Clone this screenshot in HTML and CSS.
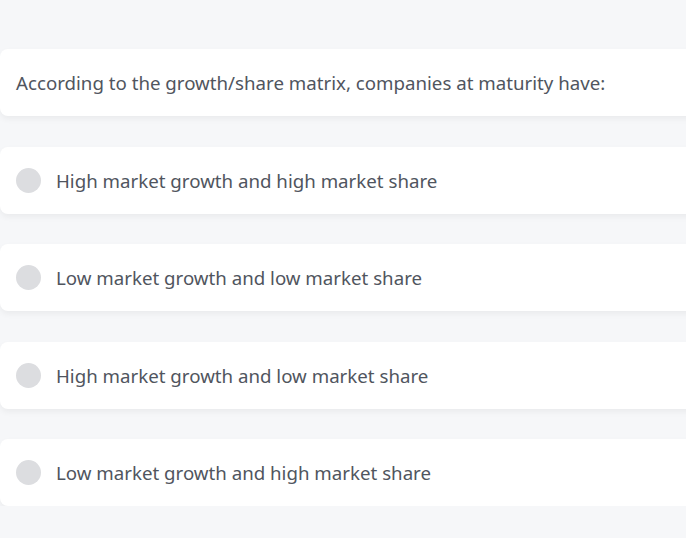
FILE: index.html
```html
<!DOCTYPE html>
<html>
<head>
<meta charset="utf-8">
<link rel="stylesheet" href="styles.css">
</head>
<body>
<div class="quiz">
  <div class="card question">According to the growth/share matrix, companies at maturity have:</div>
  <div class="card option"><span class="radio"></span><span class="label">High market growth and high market share</span></div>
  <div class="card option"><span class="radio"></span><span class="label">Low market growth and low market share</span></div>
  <div class="card option"><span class="radio"></span><span class="label">High market growth and low market share</span></div>
  <div class="card option"><span class="radio"></span><span class="label">Low market growth and high market share</span></div>
</div>
</body>
</html>
```
FILE: styles.css
```css
html, body {
  margin: 0;
  padding: 0;
  background: #f6f7f9;
  overflow: hidden;
}
body {
  font-family: "Noto Sans", "Open Sans", sans-serif;
  color: #50555e;
}
.quiz {
  display: flex;
  flex-direction: column;
  gap: 30.5px;
  padding-top: 49px;
  margin-right: -12px;
}
.card {
  background: #ffffff;
  border-radius: 8px;
  height: 67px;
  box-sizing: border-box;
  display: flex;
  align-items: center;
  padding-left: 16px;
  box-shadow: 0 3px 6px rgba(0, 0, 0, 0.05);
  font-size: 18.7px;
  font-weight: 400;
}
.radio {
  width: 25px;
  height: 25px;
  border-radius: 50%;
  background: #dcdde0;
  flex: none;
}
.label {
  margin-left: 15px;
}
```
